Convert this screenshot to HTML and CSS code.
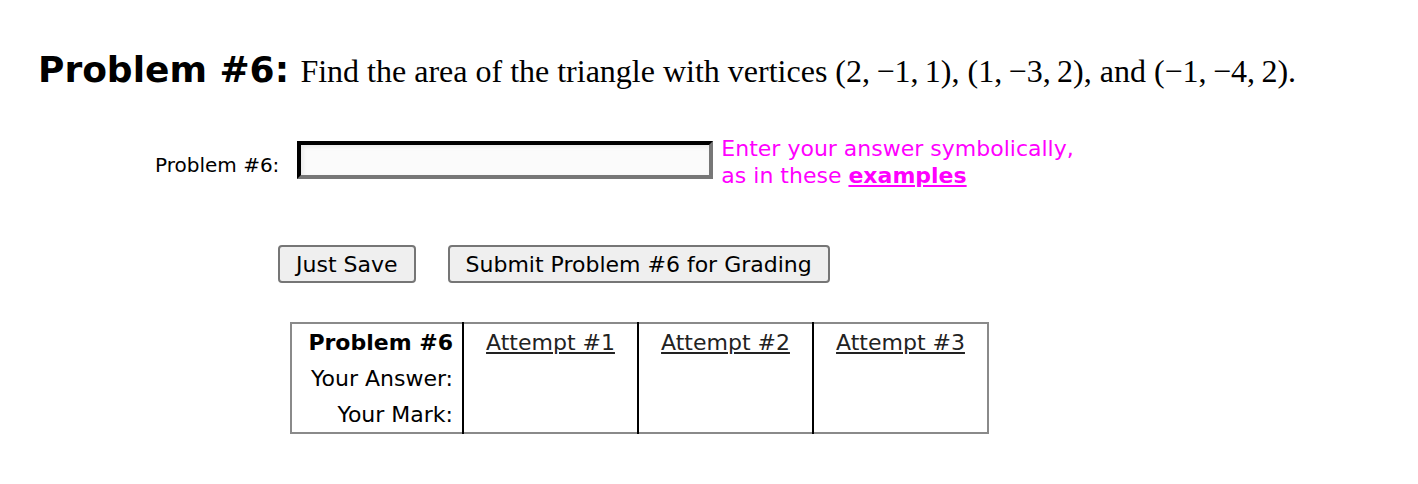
FILE: index.html
```html
<!DOCTYPE html>
<html lang="en">
<head>
    <meta charset="UTF-8">
    <title>Problem #6</title>
    <link rel="stylesheet" href="styles.css">
</head>
<body>
    <div class="page">
        <!-- Problem statement -->
        <div class="statement">
            <span class="prob-title">Problem #6:</span>
            <span class="prob-text">Find the area of the triangle with vertices (2,&thinsp;&minus;1,&thinsp;1), (1,&thinsp;&minus;3,&thinsp;2), and (&minus;1,&thinsp;&minus;4,&thinsp;2).</span>
        </div>

        <!-- Answer entry -->
        <div class="answer-row">
            <label for="ans6" class="answer-label">Problem #6:</label>
            <input type="text" id="ans6" class="answer-box">
            <div class="hint">
                Enter your answer symbolically,<br>
                as in these <a href="#" class="hint-link">examples</a>
            </div>
        </div>

        <!-- Buttons -->
        <div class="button-row">
            <button class="btn">Just Save</button>
            <button class="btn">Submit Problem #6 for Grading</button>
        </div>

        <!-- Attempts table -->
        <table class="attempts">
            <tr>
                <th class="row-head">Problem #6</th>
                <td class="attempt"><a href="#">Attempt #1</a></td>
                <td class="attempt"><a href="#">Attempt #2</a></td>
                <td class="attempt"><a href="#">Attempt #3</a></td>
            </tr>
            <tr>
                <td class="row-head">Your Answer:</td>
                <td class="attempt"></td>
                <td class="attempt"></td>
                <td class="attempt"></td>
            </tr>
            <tr>
                <td class="row-head">Your Mark:</td>
                <td class="attempt"></td>
                <td class="attempt"></td>
                <td class="attempt"></td>
            </tr>
        </table>
    </div>
</body>
</html>
```

FILE: styles.css
```css
body {
    margin: 0;
    padding: 0;
    background: #fff;
    color: #000;
    font-family: "DejaVu Sans", Verdana, sans-serif;
    font-size: 20px;
}
.page {
    padding: 42px 0 0 38px;
}
.statement {
    line-height: 56px;
    white-space: nowrap;
}
.prob-title {
    font-weight: bold;
    font-size: 36px;
}
.prob-text {
    font-family: "Liberation Serif", "Times New Roman", serif;
    font-size: 32px;
    margin-left: 5px;
}
.answer-row {
    display: flex;
    align-items: flex-start;
    margin: 32px 0 0 117px;
}
.answer-label {
    margin-top: 18px;
    margin-right: 18px;
}
.answer-box {
    box-sizing: border-box;
    width: 416px;
    height: 38px;
    margin: 6px 0 0 0;
    border: 4px inset #777;
    border-top-color: #222;
    border-left-color: #222;
    border-bottom-color: #777;
    border-right-color: #777;
    background: #fbfbfb;
    box-shadow: inset 2px 2px 4px rgba(0, 0, 0, 0.08);
}
.hint {
    color: #ff00ff;
    font-size: 22px;
    line-height: 27px;
    margin-left: 8px;
}
.hint-link {
    color: #ff00ff;
    font-weight: bold;
}
.button-row {
    display: flex;
    gap: 32px;
    margin: 56px 0 0 240px;
}
.btn {
    height: 38px;
    padding: 0 16px;
    font-family: "DejaVu Sans", Verdana, sans-serif;
    font-size: 22px;
    color: #000;
    background: #efefef;
    border: 2px solid #767676;
    border-radius: 4px;
}
.attempts {
    border-collapse: collapse;
    border: 2px solid #8a8a8a;
    margin: 39px 0 0 252px;
    font-size: 22px;
}
.attempts td,
.attempts th {
    height: 36px;
    padding: 0 9px 0 9px;
    vertical-align: middle;
}
.row-head {
    width: 152px;
    text-align: right;
}
.attempt {
    width: 155px;
    text-align: center;
    border-left: 2px solid #000;
}
.attempt a {
    color: #222;
}
```
